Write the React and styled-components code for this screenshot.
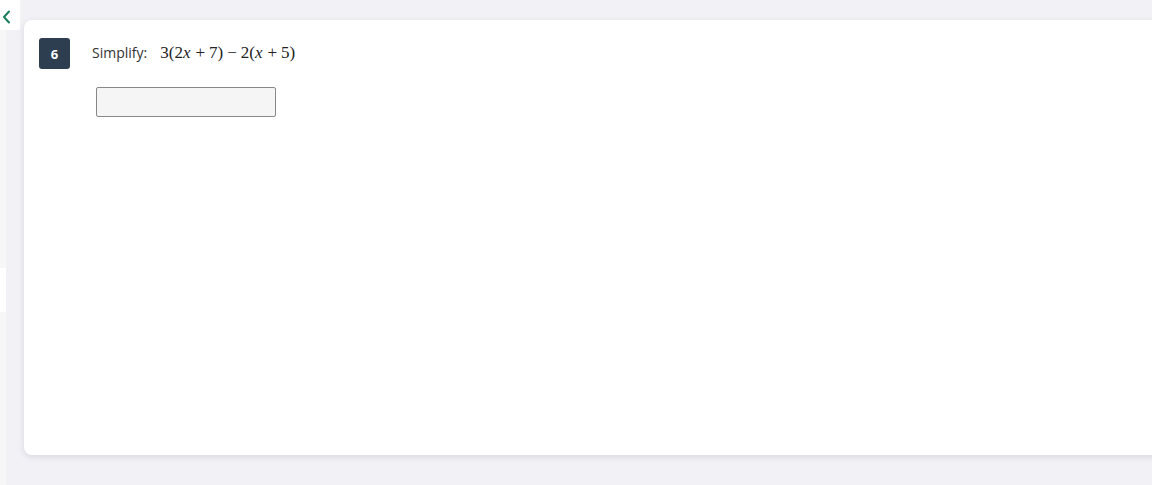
import React from "react";
import styled, { createGlobalStyle } from "styled-components";

const Global = createGlobalStyle`
  html, body { margin: 0; padding: 0; background: #f2f1f6; }
  body { font-family: "Open Sans", "Liberation Sans", sans-serif; overflow: hidden; }
  * { box-sizing: border-box; }
`;

const Page = styled.div`
  position: relative;
  display: flex;
  width: 1152px;
  height: 485px;
  overflow: hidden;
  background: #f2f1f6;
`;

const Sidebar = styled.div`
  width: 6px;
  flex: none;
  display: flex;
  flex-direction: column;
  background: #f7f7f8;
  padding-top: 268px;
`;

const SideMark = styled.div`
  height: 44px;
  background: #ffffff;
`;

const Toggle = styled.button`
  position: absolute;
  left: 0;
  top: 0;
  width: 20px;
  height: 30px;
  border: none;
  padding: 3px 0 0 1px;
  background: #ffffff;
  border-radius: 0 0 2px 0;
  display: flex;
  align-items: center;
  justify-content: flex-start;
  cursor: pointer;
`;

const Main = styled.div`
  flex: 1;
  padding: 20px 0 30px 18px;
  display: flex;
`;

const Card = styled.div`
  flex: 1;
  margin-right: -20px;
  background: #ffffff;
  border-radius: 8px;
  box-shadow: 0 2px 6px rgba(40, 40, 70, 0.12);
  padding: 18px 15px;
`;

const QuestionRow = styled.div`
  display: flex;
  align-items: center;
  gap: 22px;
`;

const Badge = styled.div`
  width: 31px;
  height: 31px;
  border-radius: 3px;
  background: #2c3e50;
  color: #ffffff;
  font-weight: 700;
  font-size: 13px;
  display: flex;
  align-items: center;
  justify-content: center;
`;

const Prompt = styled.div`
  display: flex;
  align-items: baseline;
  font-size: 14px;
  color: #333333;
  margin-top: -1px;
`;

const MathExpr = styled.span`
  font-family: "Liberation Serif", "DejaVu Serif", serif;
  font-size: 17px;
  color: #222;
  margin-left: 13px;
`;

const Var = styled.i`
  font-style: italic;
  padding-right: 1px;
`;

const Op = styled.span`
  padding: 0 ${(p) => p.$space || 4}px;
`;

const AnswerInput = styled.input`
  display: block;
  margin: 18px 0 0 57px;
  width: 180px;
  height: 30px;
  border: 1px solid #888888;
  border-radius: 2px;
  background: #f5f5f5;
  outline: none;
`;

export default function App() {
  return (
    <>
      <Global />
      <Page>
        <Sidebar>
          <SideMark />
        </Sidebar>
        <Main>
          <Card>
            <QuestionRow>
              <Badge>6</Badge>
              <Prompt>
                Simplify:
                <MathExpr>
                  3(2<Var>x</Var>
                  <Op>+</Op>7)
                  <Op>−</Op>2(<Var>x</Var>
                  <Op>+</Op>5)
                </MathExpr>
              </Prompt>
            </QuestionRow>
            <AnswerInput type="text" aria-label="answer" />
          </Card>
        </Main>
        <Toggle aria-label="collapse">
          <svg width="12" height="14" viewBox="0 0 12 14">
            <path d="M8 1.5 L3 7 L8 12.5" fill="none" stroke="#1a7d5a" strokeWidth="2" strokeLinecap="round" strokeLinejoin="round" />
          </svg>
        </Toggle>
      </Page>
    </>
  );
}
